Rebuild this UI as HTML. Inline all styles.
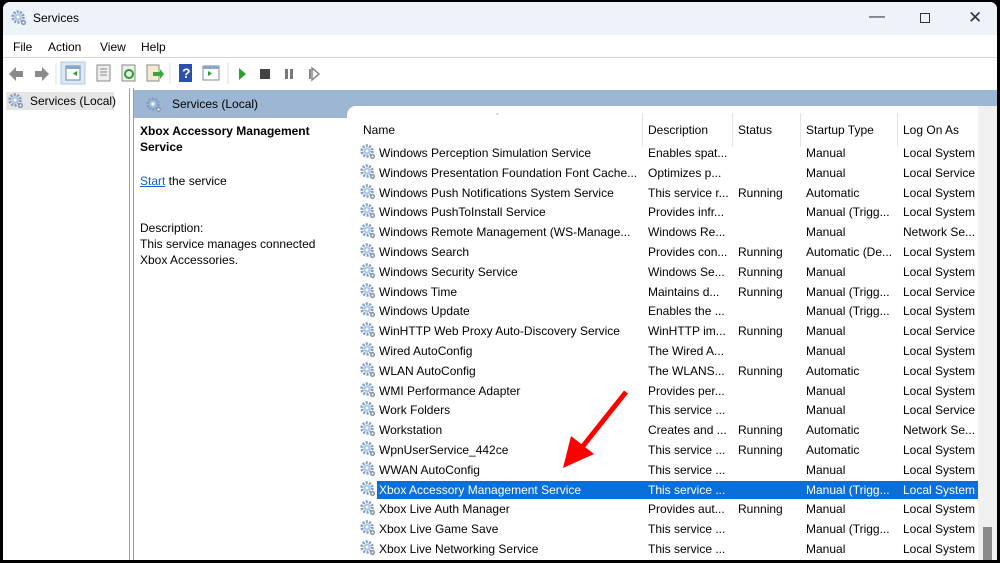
<!DOCTYPE html>
<html><head><meta charset="utf-8"><style>
*{margin:0;padding:0;box-sizing:border-box}
body{width:1000px;height:563px;background:#000;font-family:"Liberation Sans",sans-serif;font-size:12px;color:#000;position:relative;overflow:hidden}
.win{position:absolute;left:3px;top:2px;width:994px;height:558px;background:#fff;border-radius:7px 7px 0 0;overflow:hidden}
.title{position:absolute;left:0;top:0;width:100%;height:33px;background:#eef3fa}
.title span{position:absolute;left:30px;top:9px;font-size:12px}
.menu{position:absolute;top:38px;left:0;width:100%;font-size:12px}
.menu span{position:absolute}
.tb{position:absolute;top:55px;left:0;width:100%;height:30px;border-top:1px solid #d5d5d5;background:#fff}
.abs{position:absolute}
.sel{position:absolute;left:374px;width:601px;height:18px;background:#0a6fd8}
.sep{position:absolute;top:111px;width:1px;height:34px;background:#e4e4e4}
</style></head><body>
<svg width="0" height="0" style="position:absolute"><defs>
<g id="g"><circle cx="7" cy="7" r="5.2" fill="none" stroke="#7e9ec2" stroke-width="3" stroke-dasharray="2 1.3"/><circle cx="7" cy="7" r="3.3" fill="#a8c4e2"/><circle cx="7" cy="7" r="1.5" fill="#fff"/><circle cx="12.5" cy="12.5" r="2.6" fill="#8a9aae"/><circle cx="12.5" cy="12.5" r="1" fill="#fff"/></g>
</defs></svg>
<div class="win">
<div class="title"><svg class="abs" style="left:8px;top:8px" width="17" height="17"><use href="#g"/></svg><span>Services</span>
<span style="left:866px;top:6px;font-size:16px;color:#333">&#8212;</span>
<div class="abs" style="left:917px;top:11px;width:10px;height:10px;border:1.3px solid #333"></div>
<span style="left:965px;top:6px;font-size:17px;color:#333">&#10005;</span></div>
<div class="menu"><span style="left:10px">File</span><span style="left:45px">Action</span><span style="left:97px">View</span><span style="left:138px">Help</span></div>
<div class="tb">
<svg class="abs" style="left:0;top:0" width="330" height="30">
<path d="M6 16 L13 9 V13 H20 V19 H13 V23Z" fill="#8a8a8a"/>
<path d="M46 16 L39 9 V13 H32 V19 H39 V23Z" fill="#8a8a8a"/>
<line x1="53" y1="5" x2="53" y2="26" stroke="#ddd"/>
<rect x="58" y="4" width="24" height="22" fill="#dbe9f7" stroke="#a9cbeb"/>
<rect x="63" y="8" width="14" height="14" fill="#fff" stroke="#6b86a8"/><rect x="63" y="8" width="14" height="3" fill="#8aa6c8"/><path d="M74 13 L70 15.5 L74 18Z" fill="#2a9a2a"/>
<rect x="94" y="7" width="13" height="16" fill="#eee" stroke="#8a8a8a"/><line x1="97" y1="11" x2="104" y2="11" stroke="#888"/><line x1="97" y1="14" x2="104" y2="14" stroke="#888"/><line x1="97" y1="17" x2="104" y2="17" stroke="#888"/>
<rect x="119" y="7" width="13" height="16" fill="#eee" stroke="#8a8a8a"/><circle cx="126" cy="16" r="4" fill="none" stroke="#2aa02a" stroke-width="2"/>
<rect x="144" y="7" width="12" height="16" fill="#f3ead0" stroke="#8a8a8a"/><path d="M150 14 H157 V11 L161 16 L157 21 V18 H150Z" fill="#3aa53a"/>
<line x1="167" y1="5" x2="167" y2="26" stroke="#ddd"/>
<rect x="176" y="6" width="13" height="18" fill="#2b4fb0"/><text x="179" y="20" fill="#fff" font-size="14" font-weight="bold" font-family="Liberation Sans">?</text>
<rect x="200" y="8" width="16" height="14" fill="#fff" stroke="#7a8aa0"/><rect x="200" y="8" width="16" height="3" fill="#8aa6c8"/><path d="M205 13 L209 15.5 L205 18Z" fill="#2a9a2a"/>
<line x1="225" y1="5" x2="225" y2="26" stroke="#ddd"/>
<path d="M236 10 L243 16 L236 22Z" fill="#2aa02a"/>
<rect x="257" y="11" width="10" height="10" fill="#444"/>
<rect x="282" y="11" width="3" height="10" fill="#777"/><rect x="287" y="11" width="3" height="10" fill="#777"/>
<rect x="306" y="11" width="2" height="10" fill="#888"/><path d="M309 10 L316 16 L309 22Z" fill="none" stroke="#888" stroke-width="1.5"/>
</svg></div>
<div class="abs" style="left:0;top:86px;width:127px;height:480px;border-right:1px solid #a0a0a0"></div>
<div class="abs" style="left:130px;top:86px;width:1px;height:480px;background:#a0a0a0"></div>
<div class="abs" style="left:3px;top:90px;width:108px;height:18px;background:#e5e5e5"></div>
<svg class="abs" style="left:5px;top:91px" width="17" height="17"><use href="#g"/></svg>
<span class="abs" style="left:27px;top:92px;font-size:12px">Services (Local)</span>
<div class="abs" style="left:131px;top:88px;width:870px;height:28px;background:#9db6d3"></div>
<svg class="abs" style="left:143px;top:95px" width="17" height="17"><use href="#g"/></svg>
<span class="abs" style="left:169px;top:95px;font-size:12px">Services (Local)</span>
<div class="abs" style="left:344px;top:104px;width:650px;height:30px;background:#fff;border-radius:9px 0 0 0"></div>
<div class="abs" style="left:137px;top:121px;font-weight:bold;font-size:12px;line-height:16px;width:200px">Xbox Accessory Management Service</div>
<div class="abs" style="left:137px;top:172px;font-size:12px"><span style="color:#0a66c8;text-decoration:underline">Start</span> the service</div>
<div class="abs" style="left:137px;top:218px;font-size:12px;line-height:16px;width:205px">Description:<br>This service manages connected Xbox Accessories.</div>
<span class="abs" style="left:360px;top:121px;font-size:12px">Name</span>
<span class="abs" style="left:493px;top:110px;font-size:9px;color:#999">&#710;</span>
<div class="sep" style="left:639px"></div><div class="sep" style="left:729px"></div><div class="sep" style="left:797px"></div><div class="sep" style="left:894px"></div>
<span class="abs" style="left:645px;top:121px;font-size:12px">Description</span>
<span class="abs" style="left:735px;top:121px;font-size:12px">Status</span>
<span class="abs" style="left:803px;top:121px;font-size:12px">Startup Type</span>
<span class="abs" style="left:900px;top:121px;font-size:12px">Log On As</span>
<div class="abs" style="left:975px;top:104px;width:19px;height:460px;background:#f0f0f0"></div>
<div class="abs" style="left:980px;top:525px;width:9px;height:35px;background:#8a8a8a"></div>
<div class="sel" style="top:479px"></div>
</div>
<svg class="abs" style="left:0;top:0" width="1000" height="563">
<line x1="626" y1="392" x2="583" y2="446" stroke="#ff0000" stroke-width="5"/>
<path d="M563 468 L571 436 L594 454Z" fill="#ff0000"/>
</svg>
<div id="list" style="position:absolute;left:3px;top:2px"></div>
<script>
var d=[["Windows Perception Simulation Service","Enables spat...","","Manual","Local System"],
["Windows Presentation Foundation Font Cache...","Optimizes p...","","Manual","Local Service"],
["Windows Push Notifications System Service","This service r...","Running","Automatic","Local System"],
["Windows PushToInstall Service","Provides infr...","","Manual (Trigg...","Local System"],
["Windows Remote Management (WS-Manage...","Windows Re...","","Manual","Network Se..."],
["Windows Search","Provides con...","Running","Automatic (De...","Local System"],
["Windows Security Service","Windows Se...","Running","Manual","Local System"],
["Windows Time","Maintains d...","Running","Manual (Trigg...","Local Service"],
["Windows Update","Enables the ...","","Manual (Trigg...","Local System"],
["WinHTTP Web Proxy Auto-Discovery Service","WinHTTP im...","Running","Manual","Local Service"],
["Wired AutoConfig","The Wired A...","","Manual","Local System"],
["WLAN AutoConfig","The WLANS...","Running","Automatic","Local System"],
["WMI Performance Adapter","Provides per...","","Manual","Local System"],
["Work Folders","This service ...","","Manual","Local Service"],
["Workstation","Creates and ...","Running","Automatic","Network Se..."],
["WpnUserService_442ce","This service ...","Running","Automatic","Local System"],
["WWAN AutoConfig","This service ...","","Manual","Local System"],
["Xbox Accessory Management Service","This service ...","","Manual (Trigg...","Local System"],
["Xbox Live Auth Manager","Provides aut...","Running","Manual","Local System"],
["Xbox Live Game Save","This service ...","","Manual (Trigg...","Local System"],
["Xbox Live Networking Service","This service ...","","Manual","Local System"]];
var h="",x=[376,645,735,803,900];
for(var i=0;i<d.length;i++){var t=142+i*19.8-1;var s=i==17;
h+='<svg style="position:absolute;left:357px;top:'+(t+1)+'px" width="17" height="17"><use href="#g"/></svg>';
for(var j=0;j<5;j++)h+='<span style="position:absolute;left:'+x[j]+'px;top:'+(t+3)+'px;white-space:nowrap;font-size:12px;color:'+(s?'#fff':'#000')+'">'+d[i][j]+'</span>';}
document.getElementById('list').innerHTML=h;
</script>
</body></html>
